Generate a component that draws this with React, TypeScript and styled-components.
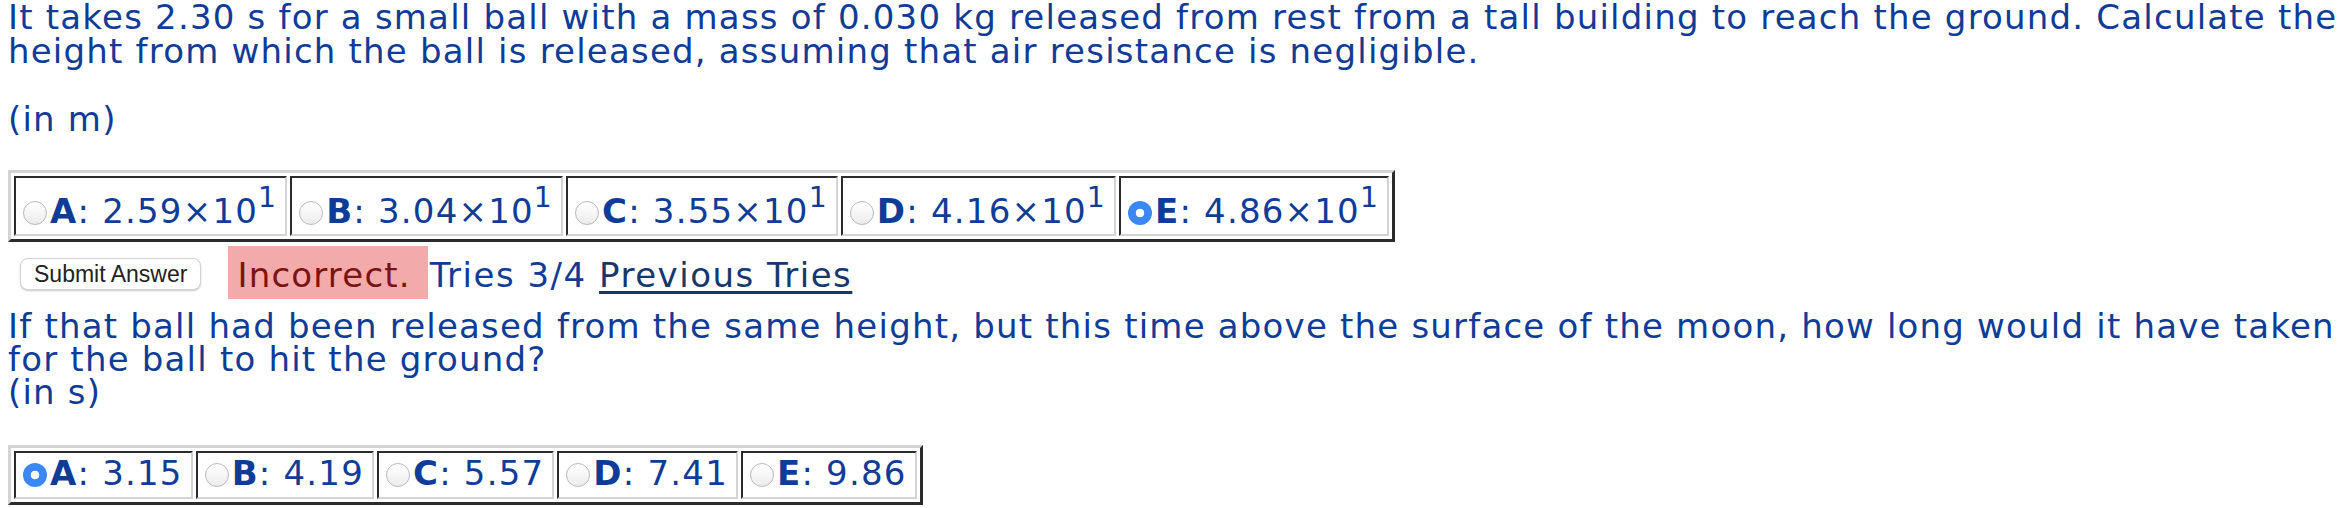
import React from "react";
import styled, { createGlobalStyle } from "styled-components";

const GlobalStyle = createGlobalStyle`
  html, body {
    margin: 0;
    background: #ffffff;
  }
  body {
    padding: 0 8px;
    font-family: "DejaVu Sans", Verdana, sans-serif;
    color: #0f3c97;
  }
`;

const Page = styled.div`
  font-size: 34px;
  letter-spacing: 1.2px;
`;

const Question = styled.p<{ $lineHeight: number; $top: number }>`
  margin: ${(p) => p.$top}px 0 0;
  line-height: ${(p) => p.$lineHeight}px;
  white-space: nowrap;
`;

const OptionTable = styled.div<{ $top: number }>`
  display: flex;
  width: fit-content;
  gap: 3px;
  padding: 3px;
  margin-top: ${(p) => p.$top}px;
  border: 3px solid;
  border-color: #d4d4d4 #2b2b2b #2b2b2b #d4d4d4;
`;

const OptionCell = styled.div<{ $withExponent: boolean }>`
  border: 2px solid;
  border-color: #2b2b2b #d4d4d4 #d4d4d4 #2b2b2b;
  white-space: nowrap;
  padding: ${(p) => (p.$withExponent ? "10px 8px 0 5px" : "0 8px 4px 5px")};
  line-height: ${(p) => (p.$withExponent ? 46 : 40)}px;
`;

const Radio = styled.span<{ $checked: boolean }>`
  display: inline-block;
  box-sizing: border-box;
  width: 24px;
  height: 24px;
  margin: 0 3px 0 2px;
  vertical-align: -2px;
  border-radius: 50%;
  ${(p) =>
    p.$checked
      ? `
    background: radial-gradient(circle, #ffffff 0 4px, #3b87f5 4.6px);
    border: none;
  `
      : `
    background: linear-gradient(#ffffff, #ececec);
    border: 1px solid #b9b9b9;
  `}
`;

const Letter = styled.b`
  font-weight: bold;
`;

const Exponent = styled.sup`
  font-size: 0.83em;
  line-height: 0;
  vertical-align: 16px;
`;

const ActionRow = styled.div`
  display: flex;
  align-items: flex-start;
  height: 53px;
  margin-top: 4px;
  white-space: nowrap;
`;

const SubmitButton = styled.button`
  height: 32px;
  margin: 12px 27px 0 12px;
  padding: 0 13px;
  font-family: "Liberation Sans", Arial, sans-serif;
  font-size: 23px;
  letter-spacing: 0;
  color: #222222;
  background: #ffffff;
  border: 1px solid #d3d3d3;
  border-radius: 8px;
  box-shadow: 0 1px 2px rgba(0, 0, 0, 0.22);
`;

const Feedback = styled.span`
  padding: 5px 17px 0 9px;
  line-height: 48px;
  color: #7a1414;
  background: #f2aaaa;
`;

const Status = styled.span`
  padding-top: 5px;
  margin-left: 2px;
  line-height: 48px;
  letter-spacing: 1.5px;
`;

const PreviousLink = styled.a`
  color: #15386c;
  text-decoration: underline;
  text-underline-offset: 4px;
`;

type Option = { letter: string; value: string; exponent?: string };

const heightOptions: Option[] = [
  { letter: "A", value: "2.59×10", exponent: "1" },
  { letter: "B", value: "3.04×10", exponent: "1" },
  { letter: "C", value: "3.55×10", exponent: "1" },
  { letter: "D", value: "4.16×10", exponent: "1" },
  { letter: "E", value: "4.86×10", exponent: "1" },
];

const timeOptions: Option[] = [
  { letter: "A", value: "3.15" },
  { letter: "B", value: "4.19" },
  { letter: "C", value: "5.57" },
  { letter: "D", value: "7.41" },
  { letter: "E", value: "9.86" },
];

function Options({ items, selected, top }: { items: Option[]; selected: string; top: number }) {
  const withExponent = items.some((o) => o.exponent);
  return (
    <OptionTable $top={top}>
      {items.map((o) => (
        <OptionCell key={o.letter} $withExponent={withExponent}>
          <Radio $checked={o.letter === selected} />
          <Letter>{o.letter}</Letter>: {o.value}
          {o.exponent && <Exponent>{o.exponent}</Exponent>}
        </OptionCell>
      ))}
    </OptionTable>
  );
}

export default function App() {
  return (
    <Page>
      <GlobalStyle />
      <Question $lineHeight={34} $top={0}>
        It takes 2.30 s for a small ball with a mass of 0.030 kg released from rest from a tall building to reach the ground. Calculate the
        <br />
        height from which the ball is released, assuming that air resistance is negligible.
        <br />
        <br />
        (in m)
      </Question>
      <Options items={heightOptions} selected="E" top={34} />
      <ActionRow>
        <SubmitButton>Submit Answer</SubmitButton>
        <Feedback>Incorrect.</Feedback>
        <Status>
          Tries 3/4 <PreviousLink href="#">Previous Tries</PreviousLink>
        </Status>
      </ActionRow>
      <Question $lineHeight={33} $top={11}>
        If that ball had been released from the same height, but this time above the surface of the moon, how long would it have taken
        <br />
        for the ball to hit the ground?
        <br />
        (in s)
      </Question>
      <Options items={timeOptions} selected="A" top={36} />
    </Page>
  );
}
